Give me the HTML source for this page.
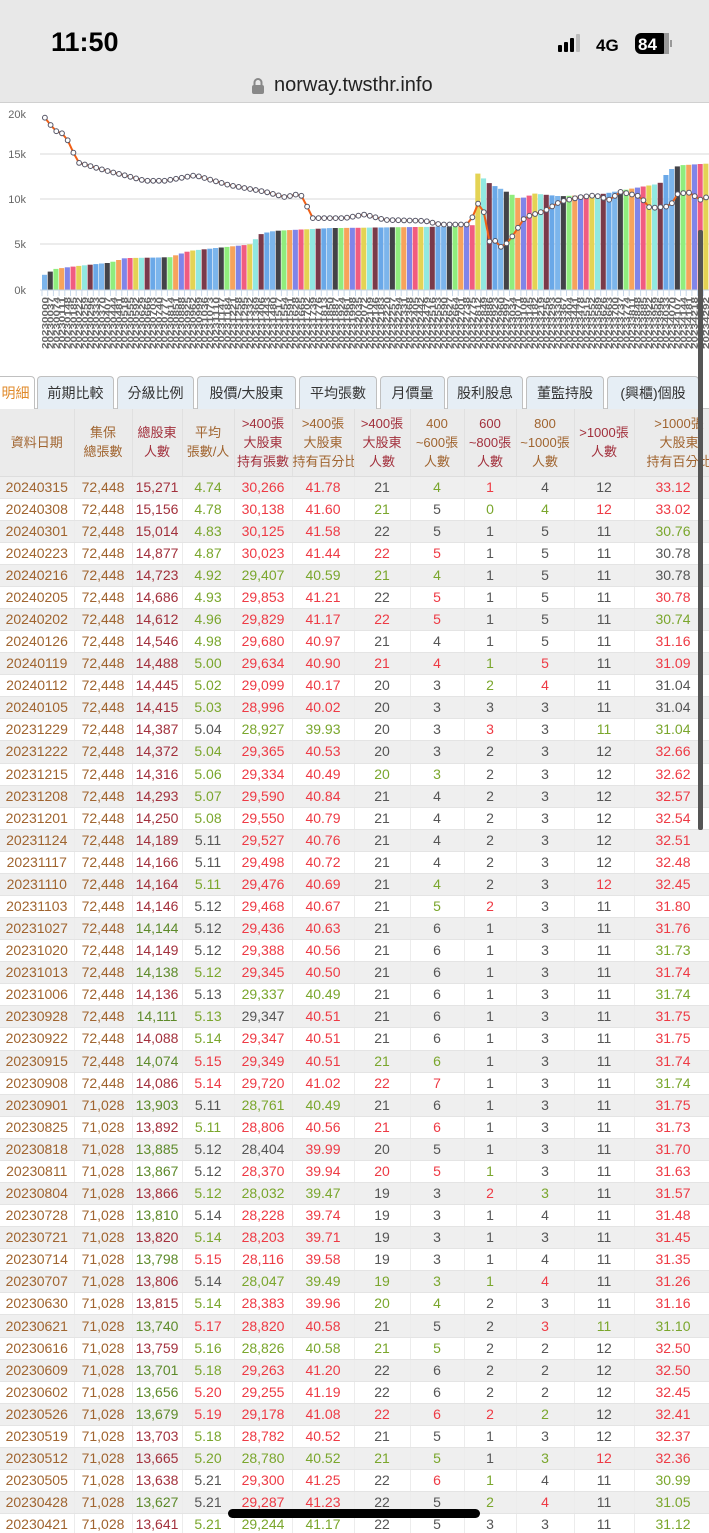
<!DOCTYPE html>
<html><head><meta charset="utf-8">
<style>
*{margin:0;padding:0;box-sizing:border-box}
html,body{width:709px;height:1533px;overflow:hidden;background:#fff;font-family:"Liberation Sans","Noto Sans CJK TC",sans-serif;position:relative}
#top{position:absolute;left:0;top:0;width:709px;height:103px;background:#e8e8e8;border-bottom:1px solid #d0d0d0}
#time{position:absolute;left:51px;top:27px;font-size:27px;font-weight:bold;color:#000}
#url{position:absolute;left:274px;top:74px;font-size:20px;color:#222}
#chart{position:absolute;left:0;top:104px}
#tabs{position:absolute;left:0;top:376px;height:33px;width:709px;border-bottom:1px solid #c8c8c8}
.tab{position:absolute;top:0;height:33px;border:1px solid #c0c0c0;border-bottom:none;border-radius:4px 4px 0 0;background:#e6eef5;font-size:14px;color:#333;text-align:center;line-height:32px}
table{position:absolute;left:0;top:409px;border-collapse:collapse;table-layout:fixed;width:724px}
td,th{text-align:center;white-space:nowrap;overflow:hidden}
th{background:#ebebeb;font-weight:normal;font-size:13px;line-height:19px;height:67px;border-right:1px solid #e0e0e0;border-bottom:1px solid #ddd}
td{font-size:14px;height:22.09px;line-height:21px;border-bottom:1px solid #e4e4e4;border-right:1px solid #ececec}
tr.o td{background:#efefef}
.b{color:#a0642f}.d{color:#a2303c}.r{color:#ee3a44}.g{color:#7aa62c}.k{color:#555}.G{color:#5d8a2a}
#sb{position:absolute;left:698px;top:230px;width:5px;height:600px;background:#555;border-radius:2px}
#home{position:absolute;left:228px;top:1509px;width:252px;height:9px;background:#000;border-radius:5px}
</style></head><body>
<div id="top">
<div id="time">11:50</div>
<svg style="position:absolute;left:558px;top:33px" width="120" height="22">
<rect x="0" y="12" width="4" height="7" rx="1" fill="#000"/><rect x="6" y="9" width="4" height="10" rx="1" fill="#000"/><rect x="12" y="5" width="4" height="14" rx="1" fill="#000"/><rect x="18" y="1" width="4" height="18" rx="1" fill="#bbb"/>
<text x="38" y="18" font-family="Liberation Sans" font-weight="bold" font-size="17" fill="#000">4G</text>
<rect x="77" y="0" width="33" height="21" rx="6" fill="#000"/><rect x="106" y="0" width="5" height="21" fill="#999"/>
<text x="80" y="17" font-family="Liberation Sans" font-weight="bold" font-size="17" fill="#fff">84</text>
<rect x="112" y="7" width="2" height="7" fill="#999"/>
</svg>
<svg style="position:absolute;left:251px;top:77px" width="14" height="18"><path d="M3.5 8V5.5a3.5 3.5 0 0 1 7 0V8" stroke="#888" stroke-width="2" fill="none"/><rect x="1" y="8" width="12" height="9" rx="2" fill="#888"/></svg>
<div id="url">norway.twsthr.info</div>
</div>

<svg id="chart" width="709" height="268" font-family="Liberation Sans">
<g fill="#666" font-size="11" text-anchor="end"><text x="26" y="14">20k</text><text x="26" y="54">15k</text><text x="26" y="99">10k</text><text x="26" y="144">5k</text><text x="26" y="190">0k</text></g>
<g stroke="#d8d8d8"><line x1="40" x2="709" y1="50" y2="50"/><line x1="40" x2="709" y1="95" y2="95"/><line x1="40" x2="709" y1="140" y2="140"/></g>
<g id="bars"></g>
<line x1="40" x2="709" y1="186" y2="186" stroke="#c0d0e0"/>
<g id="ticks" stroke="#c8d8ea"></g>
<g id="ln"></g>
<g id="lbl" fill="#666" font-size="8.5" font-weight="bold"></g>
</svg>

<div id="tabs">
<div class="tab" style="left:-4px;width:39px;background:#fff;color:#e08a2a;height:34px">明細</div>
<div class="tab" style="left:37px;width:77px">前期比較</div>
<div class="tab" style="left:117px;width:77px">分級比例</div>
<div class="tab" style="left:197px;width:99px">股價/大股東</div>
<div class="tab" style="left:299px;width:78px">平均張數</div>
<div class="tab" style="left:380px;width:65px">月價量</div>
<div class="tab" style="left:447px;width:76px">股利股息</div>
<div class="tab" style="left:526px;width:78px">董監持股</div>
<div class="tab" style="left:607px;width:92px">(興櫃)個股</div>
</div>

<table id="t">
<colgroup><col style="width:74px"><col style="width:58px"><col style="width:50px"><col style="width:52px"><col style="width:58px"><col style="width:62px"><col style="width:56px"><col style="width:54px"><col style="width:52px"><col style="width:58px"><col style="width:60px"><col style="width:90px"></colgroup>
<tr><th class="b">資料日期</th><th class="b">集保<br>總張數</th><th class="d">總股東<br>人數</th><th class="b">平均<br>張數/人</th><th class="d">&gt;400張<br>大股東<br>持有張數</th><th class="b">&gt;400張<br>大股東<br>持有百分比</th><th class="d">&gt;400張<br>大股東<br>人數</th><th class="b">400<br>~600張<br>人數</th><th class="d">600<br>~800張<br>人數</th><th class="b">800<br>~1000張<br>人數</th><th class="d">&gt;1000張<br>人數</th><th class="b">&gt;1000張<br>大股東<br>持有百分比</th></tr>
</table>
<div id="sb"></div>
<div id="home"></div>

<script>
var rows=`20240315 15,271d 4.74g 30,266r 41.78r 21k 4g 1r 4k 12k 33.12r
20240308 15,156d 4.78g 30,138r 41.60r 21g 5k 0g 4g 12r 33.02r
20240301 15,014d 4.83g 30,125r 41.58r 22k 5k 1k 5k 11k 30.76g
20240223 14,877d 4.87g 30,023r 41.44r 22r 5r 1k 5k 11k 30.78k
20240216 14,723d 4.92g 29,407g 40.59g 21g 4g 1k 5k 11k 30.78k
20240205 14,686d 4.93g 29,853r 41.21r 22k 5r 1k 5k 11k 30.78r
20240202 14,612d 4.96g 29,829r 41.17r 22r 5r 1k 5k 11k 30.74g
20240126 14,546d 4.98g 29,680r 40.97r 21k 4k 1k 5k 11k 31.16r
20240119 14,488d 5.00g 29,634r 40.90r 21r 4r 1g 5r 11k 31.09r
20240112 14,445d 5.02g 29,099r 40.17r 20k 3k 2g 4r 11k 31.04k
20240105 14,415d 5.03g 28,996r 40.02r 20k 3k 3k 3k 11k 31.04k
20231229 14,387d 5.04k 28,927g 39.93g 20k 3k 3r 3k 11g 31.04g
20231222 14,372d 5.04g 29,365r 40.53r 20k 3k 2k 3k 12k 32.66r
20231215 14,316d 5.06g 29,334r 40.49r 20g 3g 2k 3k 12k 32.62r
20231208 14,293d 5.07g 29,590r 40.84r 21k 4k 2k 3k 12k 32.57r
20231201 14,250d 5.08g 29,550r 40.79r 21k 4k 2k 3k 12k 32.54r
20231124 14,189d 5.11k 29,527r 40.76r 21k 4k 2k 3k 12k 32.51r
20231117 14,166d 5.11k 29,498r 40.72r 21k 4k 2k 3k 12k 32.48r
20231110 14,164d 5.11g 29,476r 40.69r 21k 4g 2k 3k 12r 32.45r
20231103 14,146d 5.12k 29,468r 40.67r 21k 5g 2r 3k 11k 31.80r
20231027 14,144G 5.12k 29,436r 40.63r 21k 6k 1k 3k 11k 31.76r
20231020 14,149d 5.12k 29,388r 40.56r 21k 6k 1k 3k 11k 31.73g
20231013 14,138G 5.12g 29,345r 40.50r 21k 6k 1k 3k 11k 31.74r
20231006 14,136d 5.13k 29,337g 40.49g 21k 6k 1k 3k 11k 31.74g
20230928 14,111G 5.13g 29,347k 40.51r 21k 6k 1k 3k 11k 31.75r
20230922 14,088d 5.14g 29,347r 40.51r 21k 6k 1k 3k 11k 31.75r
20230915 14,074G 5.15r 29,349r 40.51r 21g 6g 1k 3k 11k 31.74r
20230908 14,086d 5.14r 29,720r 41.02r 22r 7r 1k 3k 11k 31.74g
20230901 13,903G 5.11k 28,761g 40.49g 21k 6k 1k 3k 11k 31.75r
20230825 13,892d 5.11g 28,806r 40.56r 21r 6r 1k 3k 11k 31.73r
20230818 13,885G 5.12k 28,404k 39.99r 20k 5k 1k 3k 11k 31.70r
20230811 13,867G 5.12k 28,370r 39.94r 20r 5r 1g 3k 11k 31.63r
20230804 13,866d 5.12g 28,032g 39.47g 19k 3k 2r 3g 11k 31.57r
20230728 13,810G 5.14k 28,228r 39.74r 19k 3k 1k 4k 11k 31.48r
20230721 13,820d 5.14g 28,203r 39.71r 19k 3k 1k 3k 11k 31.45r
20230714 13,798G 5.15r 28,116r 39.58r 19k 3k 1k 4k 11k 31.35r
20230707 13,806d 5.14k 28,047g 39.49g 19g 3g 1g 4r 11k 31.26r
20230630 13,815d 5.14g 28,383r 39.96r 20g 4g 2k 3k 11k 31.16r
20230621 13,740G 5.17r 28,820r 40.58r 21k 5k 2k 3r 11g 31.10g
20230616 13,759d 5.16g 28,826g 40.58g 21g 5g 2k 2k 12k 32.50r
20230609 13,701G 5.18g 29,263r 41.20r 22k 6k 2k 2k 12k 32.50r
20230602 13,656G 5.20r 29,255r 41.19r 22k 6k 2k 2k 12k 32.45r
20230526 13,679G 5.19r 29,178r 41.08r 22r 6r 2r 2g 12k 32.41r
20230519 13,703d 5.18g 28,782r 40.52r 21k 5k 1k 3k 12k 32.37r
20230512 13,665d 5.20g 28,780g 40.52g 21g 5g 1k 3g 12r 32.36r
20230505 13,638d 5.21k 29,300r 41.25r 22k 6r 1g 4k 11k 30.99g
20230428 13,627G 5.21k 29,287r 41.23r 22k 5k 2g 4r 11k 31.05g
20230421 13,641d 5.21g 29,244g 41.17g 22k 5k 3k 3k 11k 31.12g`.split("\n");
var h="";
rows.forEach(function(l,i){var p=l.trim().split(" ");
h+='<tr'+(i%2==0?' class="o"':'')+'><td class="b">'+p[0]+'</td><td class="b">'+(i<28?'72,448':'71,028')+'</td>';
for(var j=1;j<p.length;j++){var s=p[j],c=s.slice(-1),v=s.slice(0,-1);h+='<td class="'+c+'"'+(j==p.length-1?' style="text-align:right;padding-right:33px"':'')+'>'+v+'</td>';}
h+='</tr>';});
document.getElementById('t').insertAdjacentHTML('beforeend',h);

var N=117,x0=42,w=(709-x0)/N,Y0=186,k=9.1;
function interp(pts,x){for(var i=0;i<pts.length-1;i++){if(x<=pts[i+1][0]){var a=pts[i],b=pts[i+1];return a[1]+(b[1]-a[1])*(x-a[0])/(b[0]-a[0]);}}return pts[pts.length-1][1];}
var bp=[[42,1.5],[55,2.3],[75,2.6],[110,3.0],[125,3.5],[170,3.6],[190,4.3],[215,4.6],[250,5.0],[262,6.2],[275,6.5],[330,6.8],[470,7.0],[476,7.3],[478,12.8],[490,11.7],[505,10.9],[520,10.0],[535,10.6],[560,10.3],[600,10.5],[640,11.3],[660,11.7],[670,13.2],[680,13.7],[709,13.9]];
var lp=[[43,19.2],[55,17.5],[65,17.1],[72,15.4],[78,14.0],[110,13.0],[125,12.6],[145,12.0],[165,12.0],[195,12.6],[230,11.5],[265,10.8],[285,10.2],[300,10.6],[305,9.7],[312,7.9],[345,7.9],[365,8.3],[385,7.7],[425,7.6],[440,7.2],[470,7.2],[477,9.5],[483,9.4],[487,5.3],[496,5.4],[502,4.6],[510,5.5],[525,8.0],[545,8.7],[560,9.7],[580,10.2],[595,10.4],[610,9.9],[620,10.8],[640,10.3],[650,9.0],[670,9.2],[678,10.6],[690,10.7],[700,9.9],[709,10.3]];
var cols=['#7cb5ec','#434348','#90ed7d','#f7a35c','#8085e9','#f15c80','#e4d354','#91e8e1','#7a3a4a','#6aa8e8'];
var b="",lab="",pts=[],dots="",tk="";
for(var i=0;i<N;i++){var x=x0+i*w,v=interp(bp,x+w/2),hh=v*k;
b+='<rect x="'+x.toFixed(1)+'" y="'+(Y0-hh).toFixed(1)+'" width="'+(w-0.6).toFixed(1)+'" height="'+hh.toFixed(1)+'" fill="'+cols[i%10]+'"/>';
tk+='<line x1="'+x.toFixed(1)+'" x2="'+x.toFixed(1)+'" y1="186" y2="192"/>';
var lv=interp(lp,x+w/2),ly=Y0-lv*k;pts.push((x+w/2).toFixed(1)+','+ly.toFixed(1));
dots+='<circle cx="'+(x+w/2).toFixed(1)+'" cy="'+ly.toFixed(1)+'" r="2.4" fill="#fff" stroke="#556" stroke-width="1"/>';
lab+='<text transform="translate('+(x+w/2+3).toFixed(1)+',193) rotate(-90)" text-anchor="end" textLength="52" lengthAdjust="spacingAndGlyphs">2023'+String(10000+i*37).slice(-4)+'</text>';}
document.getElementById('bars').innerHTML=b;
document.getElementById('ticks').innerHTML=tk;
document.getElementById('ln').innerHTML='<polyline points="'+pts.join(' ')+'" fill="none" stroke="#f06018" stroke-width="2"/>'+dots;
document.getElementById('lbl').innerHTML=lab;
</script>
</body></html>
